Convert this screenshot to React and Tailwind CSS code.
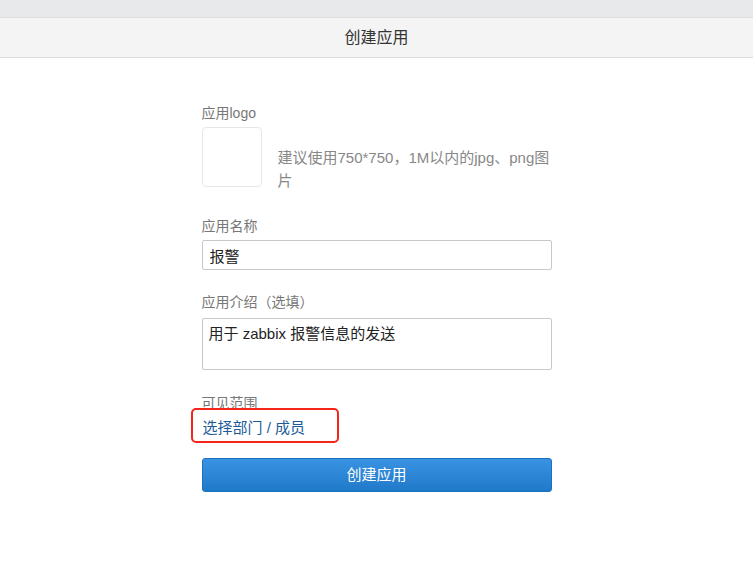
export default function App() {
    return (
        <div className="min-h-screen bg-white font-['Liberation_Sans','Noto_Sans_CJK_SC',sans-serif] text-[14px]">
            {/* top strip */}
            <div className="h-[18px] bg-[#e8e9ea] border-b border-[#dcdddd]" />

            {/* title bar */}
            <div className="h-10 bg-[#f3f4f3] border-b border-[#dcdcdc] flex items-center justify-center">
                <h1 className="text-[16px] text-[#333]">创建应用</h1>
            </div>

            <main className="w-[350px] mx-auto pt-[45px]">
                <section>
                    <p className="leading-5 text-[#777]">应用logo</p>
                    <div className="flex items-start mt-1">
                        <div className="w-[60px] h-[60px] shrink-0 border border-[#e6e6e6] rounded-[4px] bg-white" />
                        <p className="ml-4 mt-[19px] leading-[23px] text-[15px] text-[#888]">
                            建议使用750*750，1M以内的jpg、png图<br />片
                        </p>
                    </div>
                </section>

                <section className="mt-6">
                    <p className="leading-5 text-[#777]">应用名称</p>
                    <input
                        type="text"
                        defaultValue="报警"
                        className="mt-1 block w-full h-[30px] px-[7px] border border-[#c8c8c8] rounded-[2px] text-[15px] text-[#222] outline-none"
                    />
                </section>

                <section className="mt-[22px]">
                    <p className="leading-5 text-[#777]">应用介绍（选填）</p>
                    <textarea
                        defaultValue="用于 zabbix 报警信息的发送"
                        className="mt-[6px] block w-full h-[52px] px-[6px] pt-[5px] leading-5 border border-[#c8c8c8] rounded-[2px] text-[15px] text-[#222] resize-none outline-none"
                    />
                </section>

                <section className="mt-[23px]">
                    <p className="leading-5 text-[#777]">可见范围</p>
                    <div className="relative mt-[5px] inline-block">
                        <a href="#" className="block leading-5 pl-px text-[15px] text-[#1d5b98]">选择部门 / 成员</a>
                        <div className="absolute left-[-11px] top-[-10px] w-[148px] h-[35px] border-2 border-[#f4261a] rounded-[5px] pointer-events-none" />
                    </div>
                </section>

                <button
                    type="button"
                    className="mt-[19px] block w-full h-[34px] rounded-[3px] border border-[#1b70c0] bg-gradient-to-b from-[#3a92e2] to-[#1f79c9] text-white text-[15px]"
                >
                    创建应用
                </button>
            </main>
        </div>
    );
}
